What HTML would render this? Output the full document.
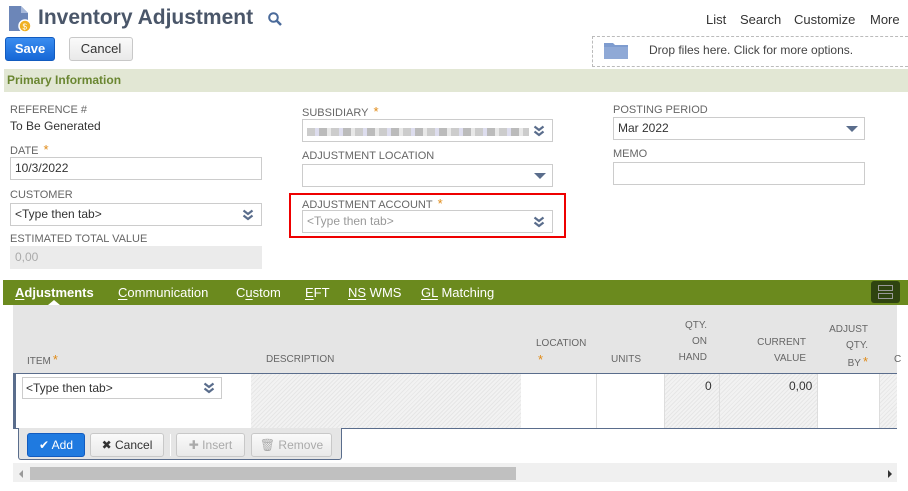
<!DOCTYPE html>
<html><head><meta charset="utf-8"><style>
*{box-sizing:border-box;margin:0;padding:0}
body{width:908px;height:491px;overflow:hidden;background:#fff;font-family:"Liberation Sans",sans-serif;font-size:12px;color:#333;position:relative}
.a{position:absolute;white-space:nowrap}
.lbl{position:absolute;font-size:11px;color:#666;white-space:nowrap}
.st{color:#e08a16;font-size:13px;margin-left:5px}
.inp{position:absolute;border:1px solid #ccc;background:#fff;height:23px;font-size:12px;padding:3px 4px;white-space:nowrap;overflow:hidden}
.dd{position:absolute;right:7px;top:5px}
.tri{position:absolute;right:6px;top:8px;width:0;height:0;border-left:6px solid transparent;border-right:6px solid transparent;border-top:6px solid #5a6d8c}
.tab{position:absolute;top:285px;color:#fff;font-size:13px}
.tab u{text-decoration-thickness:1px;text-underline-offset:2px}
.hd{position:absolute;font-size:10px;color:#666;text-align:right;line-height:16px}
.hatch{position:absolute;background:repeating-linear-gradient(135deg,#f2f2f2 0 2px,#e6e6e6 2px 3px)}
.btn{position:absolute;height:23px;border:1px solid #c8c8c8;border-radius:3px;background:linear-gradient(#fafafa,#e9e9e9);font-size:12px;text-align:center;line-height:21px}
</style></head><body>
<svg width="0" height="0" style="position:absolute"><defs><symbol id="dch" viewBox="0 0 12 12"><path d="M1.5 1.5l4.5 3.5 4.5-3.5M1.5 6.5l4.5 3.5 4.5-3.5" fill="none" stroke="#5a6d8c" stroke-width="2.2"/></symbol></defs></svg>
<!-- header -->
<svg class="a" style="left:8px;top:5px" width="24" height="28" viewBox="0 0 24 28"><path d="M1 1h12l7 7v18H1z" fill="#6c86b8"/><path d="M13 1v7h7z" fill="#a8b9da"/><circle cx="17" cy="21" r="6" fill="#f0b020" stroke="#fff" stroke-width="1.5"/><text x="14.5" y="24.5" font-size="8" fill="#fff" font-family="Liberation Sans">$</text></svg>
<div class="a" style="left:38px;top:6px;font-size:21px;font-weight:bold;color:#4a5669">Inventory Adjustment</div>
<svg class="a" style="left:267px;top:11px" width="16" height="16" viewBox="0 0 16 16"><circle cx="6.5" cy="6.5" r="4.3" fill="none" stroke="#4a6a9a" stroke-width="2"/><path d="M9.5 9.5l4.5 4.5" stroke="#4a6a9a" stroke-width="2.5"/></svg>
<div class="a" style="left:706px;top:12px;font-size:13px">List</div>
<div class="a" style="left:740px;top:12px;font-size:13px">Search</div>
<div class="a" style="left:794px;top:12px;font-size:13px">Customize</div>
<div class="a" style="left:870px;top:12px;font-size:13px">More</div>
<div class="a" style="left:5px;top:37px;width:50px;height:24px;border-radius:3px;background:linear-gradient(#3a8df0,#1667d6);border:1px solid #125bbf;color:#fff;font-weight:bold;font-size:13px;text-align:center;line-height:22px">Save</div>
<div class="btn" style="left:69px;top:37px;width:64px;height:24px;font-size:13px;line-height:22px;color:#333">Cancel</div>
<div class="a" style="left:592px;top:36px;width:316px;height:31px;border:1px dashed #bbb;border-right:none"></div>
<svg class="a" style="left:603px;top:42px" width="26" height="18" viewBox="0 0 26 18"><path d="M1 1h9l2 2h13v14H1z" fill="#7e9ccf"/><path d="M1 5h24v12H1z" fill="#8fa9d6"/></svg>
<div class="a" style="left:649px;top:43px;font-size:12px;color:#444">Drop files here. Click for more options.</div>
<div class="a" style="left:4px;top:69px;width:904px;height:23px;background:#e2e7d4"></div>
<div class="a" style="left:7px;top:73px;font-size:12px;font-weight:bold;color:#6a8631">Primary Information</div>
<!-- col1 -->
<div class="lbl" style="left:10px;top:104px">REFERENCE #</div>
<div class="a" style="left:10px;top:119px">To Be Generated</div>
<div class="lbl" style="left:10px;top:142px">DATE<span class="st">*</span></div>
<div class="inp" style="left:10px;top:157px;width:252px">10/3/2022</div>
<div class="lbl" style="left:10px;top:189px">CUSTOMER</div>
<div class="inp" style="left:10px;top:203px;width:252px">&lt;Type then tab&gt;<svg class="dd" width="12" height="12"><use href="#dch"/></svg></div>
<div class="lbl" style="left:10px;top:233px">ESTIMATED TOTAL VALUE</div>
<div class="inp" style="left:10px;top:246px;width:252px;background:#ebebeb;border-color:#ebebeb;color:#aaa">0,00</div>
<!-- col2 -->
<div class="lbl" style="left:302px;top:104px">SUBSIDIARY<span class="st">*</span></div>
<div class="inp" style="left:302px;top:119px;width:251px"><div style="margin-top:5px;height:8px;width:222px;background:repeating-linear-gradient(90deg,#ccc 0 8px,#dde 8px 12px,#bbb 12px 20px,#e8e8e8 20px 24px)"></div><svg class="dd" width="12" height="12"><use href="#dch"/></svg></div>
<div class="lbl" style="left:302px;top:150px">ADJUSTMENT LOCATION</div>
<div class="inp" style="left:302px;top:164px;width:251px"><span class="tri"></span></div>
<div class="a" style="left:289px;top:193px;width:277px;height:45px;border:2px solid #e00"></div>
<div class="lbl" style="left:302px;top:196px">ADJUSTMENT ACCOUNT<span class="st">*</span></div>
<div class="inp" style="left:302px;top:210px;width:251px;color:#999">&lt;Type then tab&gt;<svg class="dd" width="12" height="12"><use href="#dch"/></svg></div>
<!-- col3 -->
<div class="lbl" style="left:613px;top:104px">POSTING PERIOD</div>
<div class="inp" style="left:613px;top:117px;width:252px">Mar 2022<span class="tri"></span></div>
<div class="lbl" style="left:613px;top:148px">MEMO</div>
<div class="inp" style="left:613px;top:162px;width:252px"></div>
<!-- tabs -->
<div class="a" style="left:3px;top:280px;width:905px;height:25px;background:#6b8a1e"></div>
<div class="tab" style="left:15px;font-weight:bold"><u>A</u>djustments</div>
<div class="a" style="left:48px;top:300px;width:0;height:0;border-left:6px solid transparent;border-right:6px solid transparent;border-bottom:5px solid #fff"></div>
<div class="tab" style="left:118px"><u>C</u>ommunication</div>
<div class="tab" style="left:236px">C<u>u</u>stom</div>
<div class="tab" style="left:305px"><u>E</u>FT</div>
<div class="tab" style="left:348px"><u>NS</u> WMS</div>
<div class="tab" style="left:421px"><u>GL</u> Matching</div>
<div class="a" style="left:871px;top:281px;width:29px;height:22px;background:#2f4410;border-radius:3px"></div>
<div class="a" style="left:878px;top:285px;width:15px;height:6px;border:1px solid #999"></div>
<div class="a" style="left:878px;top:293px;width:15px;height:6px;border:1px solid #999"></div>
<!-- grid -->
<div class="a" style="left:13px;top:305px;width:884px;height:68px;background:#e5e5e5"></div>
<div class="hd" style="left:27px;top:352px">ITEM<span class="st" style="margin-left:2px">*</span></div>
<div class="hd" style="left:266px;top:352px">DESCRIPTION</div>
<div class="hd" style="left:536px;top:336px;text-align:left">LOCATION<br><span class="st" style="margin-left:2px">*</span></div>
<div class="hd" style="left:611px;top:352px">UNITS</div>
<div class="hd" style="left:660px;top:318px;width:47px">QTY.<br>ON<br>HAND</div>
<div class="hd" style="left:740px;top:335px;width:66px">CURRENT<br>VALUE</div>
<div class="hd" style="left:820px;top:322px;width:48px">ADJUST<br>QTY.<br>BY<span class="st" style="margin-left:2px">*</span></div>
<div class="hd" style="left:894px;top:352px">C</div>
<div class="a" style="left:13px;top:373px;width:884px;height:56px;background:#fff;border-top:1px solid #5a6d8c;border-bottom:1px solid #5a6d8c;border-left:3px solid #5a6d8c"></div>
<div class="hatch" style="left:251px;top:374px;width:270px;height:54px"></div>
<div class="hatch" style="left:664px;top:374px;width:55px;height:54px;border-left:1px solid #ddd"></div>
<div class="hatch" style="left:719px;top:374px;width:99px;height:54px;border-left:1px solid #ddd;border-right:1px solid #ddd"></div>
<div class="hatch" style="left:879px;top:374px;width:18px;height:54px;border-left:1px solid #ddd"></div>
<div class="a" style="left:596px;top:374px;width:1px;height:54px;background:#ddd"></div>
<div class="a" style="left:705px;top:379px">0</div>
<div class="a" style="left:789px;top:379px">0,00</div>
<div class="inp" style="left:22px;top:377px;width:200px;height:22px;padding:3px 3px">&lt;Type then tab&gt;<svg class="dd" style="right:6px;top:4px" width="12" height="12"><use href="#dch"/></svg></div>
<div class="a" style="left:18px;top:428px;width:324px;height:32px;background:#e5e5e5;border:1px solid #5a6d8c;border-top:none;border-radius:0 0 3px 3px"></div>
<div class="a" style="left:27px;top:433px;width:58px;height:24px;border-radius:3px;background:#1f7ae0;border:1px solid #125bbf;color:#fff;font-size:12px;line-height:22px;text-align:center">✔ Add</div>
<div class="btn" style="left:90px;top:433px;width:74px;height:24px;line-height:22px">✖ Cancel</div>
<div class="a" style="left:170px;top:434px;width:1px;height:22px;background:#fff"></div>
<div class="btn" style="left:176px;top:433px;width:69px;height:24px;line-height:22px;color:#aaa">✚ Insert</div>
<div class="btn" style="left:251px;top:433px;width:81px;height:24px;line-height:22px;color:#aaa">🗑 Remove</div>
<div class="a" style="left:13px;top:463px;width:884px;height:19px;background:#f0f0f0"></div>
<div class="a" style="left:30px;top:467px;width:486px;height:13px;background:#c0c0c0"></div>
<div class="a" style="left:19px;top:470px;width:0;height:0;border-top:4px solid transparent;border-bottom:4px solid transparent;border-right:4px solid #999"></div>
<div class="a" style="left:888px;top:470px;width:0;height:0;border-top:4px solid transparent;border-bottom:4px solid transparent;border-left:4px solid #333"></div>
</body></html>
